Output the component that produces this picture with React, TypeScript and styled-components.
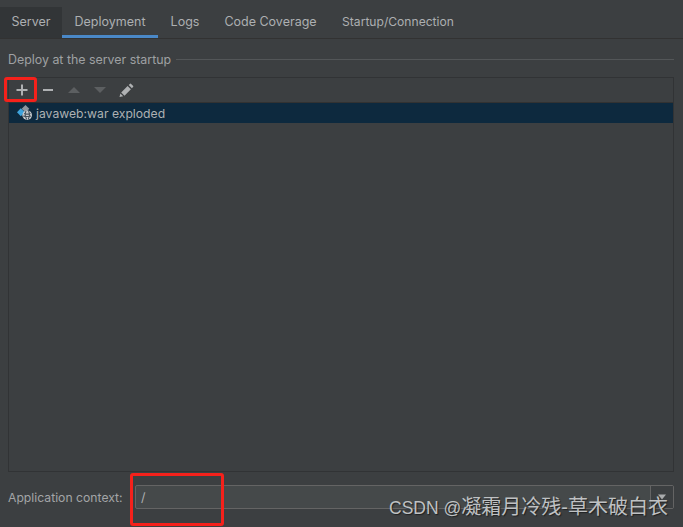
import styled, { createGlobalStyle } from 'styled-components'

const GlobalStyle = createGlobalStyle`
	html, body {
		margin: 0;
		padding: 0;
		background: #3c3f41;
	}
	body {
		font-family: 'Inter', 'Liberation Sans', 'Noto Sans CJK SC', sans-serif;
	}
`

const tabs = ['Server', 'Deployment', 'Logs', 'Code Coverage', 'Startup/Connection']

export default function App() {
	return (
		<Page>
			<GlobalStyle />
			<TabBar>
				{tabs.map((tab) => (
					<Tab key={tab} $name={tab}>
						{tab}
					</Tab>
				))}
			</TabBar>
			<Content>
				<GroupTitle>
					<span>Deploy at the server startup</span>
					<GroupLine />
				</GroupTitle>
				<ListPanel>
					<Toolbar>
						<ToolButton>
							<svg width="12" height="12" viewBox="0 0 12 12">
								<path d="M5 0.5h2v4.5h4.5v2h-4.5v4.5h-2v-4.5h-4.5v-2h4.5z" fill="#afb1b3" />
							</svg>
						</ToolButton>
						<ToolButton>
							<svg width="12" height="12" viewBox="0 0 12 12">
								<path d="M1 5h10v2h-10z" fill="#afb1b3" />
							</svg>
						</ToolButton>
						<ToolButton>
							<svg width="14" height="8" viewBox="0 0 14 8">
								<path d="M7 1l6 6h-12z" fill="#5c5f61" />
							</svg>
						</ToolButton>
						<ToolButton>
							<svg width="14" height="8" viewBox="0 0 14 8">
								<path d="M1 1h12l-6 6z" fill="#5c5f61" />
							</svg>
						</ToolButton>
						<ToolButton>
							<svg width="15" height="15" viewBox="0 0 15 15">
								<path d="M0.5 14l0.9-3.6 2.8 2.8zM2.2 9.4l6.4-6.4 3.3 3.3-6.4 6.4zM9.7 2l1.4-1.3q0.4-0.3 0.8 0l2.3 2.3q0.3 0.4 0 0.8l-1.3 1.4z" fill="#afb1b3" />
							</svg>
						</ToolButton>
					</Toolbar>
					<ArtifactRow>
						<svg width="17" height="16" viewBox="0 0 17 16">
							<path d="M8.5 0l3.8 3.8-3.8 3.8-3.8-3.8z" fill="#8b979f" />
							<path d="M3.8 3.2l4 4-4 4-3.8-4z" fill="#3fa4dc" />
							<circle cx="10.2" cy="10.2" r="4.8" fill="#c9cdd0" />
							<path d="M7 8.5q3 1.2 6.5 0M6.2 11q3.5 1 8 0M9 6q-2 4 0.8 8.5M11.5 5.8q2 4-0.3 8.6" stroke="#45525c" strokeWidth="1.1" fill="none" />
						</svg>
						<ArtifactName>javaweb:war exploded</ArtifactName>
					</ArtifactRow>
				</ListPanel>
				<ContextRow>
					<ContextLabel>Application context:</ContextLabel>
					<ContextField>
						<ContextValue>/</ContextValue>
						<DropButton>
							<svg width="10" height="6" viewBox="0 0 10 6">
								<path d="M1 0.5h8l-4 5z" fill="#a9abad" />
							</svg>
						</DropButton>
					</ContextField>
				</ContextRow>
			</Content>
			<PlusMark />
			<ContextMark />
			<Watermark>
				<WatermarkLatin>CSDN @</WatermarkLatin>凝霜月冷残-草木破白衣
			</Watermark>
		</Page>
	)
}

const Page = styled.div`
	position: relative;
	width: 683px;
	height: 527px;
	overflow: hidden;
	background: #3c3f41;
	color: #bbbbbb;
	font-size: 12.5px;
`
const TabBar = styled.div`
	display: flex;
	align-items: flex-end;
	box-sizing: border-box;
	height: 39px;
	padding-top: 7px;
	border-bottom: 1px solid #323232;
`
const tabWidths: Record<string, number> = {
	Server: 62,
	Deployment: 96,
	Logs: 54,
	'Code Coverage': 117,
	'Startup/Connection': 138,
}
const Tab = styled.div<{ $name: string }>`
	box-sizing: border-box;
	width: ${(props) => tabWidths[props.$name]}px;
	height: 31px;
	line-height: 29px;
	text-align: center;
	white-space: nowrap;
	color: #adafb1;
	font-size: ${(props) => (props.$name === 'Startup/Connection' ? '12.1px' : '12.5px')};
	background: ${(props) => (props.$name === 'Server' ? '#323537' : 'transparent')};
	border-bottom: 3px solid ${(props) => (props.$name === 'Deployment' ? '#4a88c7' : 'transparent')};
`
const Content = styled.div`
	display: flex;
	flex-direction: column;
	padding: 12px 9px 0 8px;
`
const GroupTitle = styled.div`
	display: flex;
	align-items: center;
	gap: 5px;
	height: 17px;
	color: #9fa1a3;
	font-size: 12.4px;
`
const GroupLine = styled.div`
	flex: 1;
	height: 1px;
	background: #535658;
`
const ListPanel = styled.div`
	box-sizing: border-box;
	height: 395px;
	margin-top: 9px;
	border: 1px solid #313335;
`
const Toolbar = styled.div`
	display: flex;
	align-items: center;
	height: 24px;
	border-bottom: 1px solid #323232;
`
const ToolButton = styled.div`
	display: flex;
	align-items: center;
	justify-content: center;
	width: 26px;
	height: 24px;
`
const ArtifactRow = styled.div`
	display: flex;
	align-items: center;
	gap: 2px;
	height: 20px;
	padding-left: 8px;
	background: #0d293e;
`
const ArtifactName = styled.span`
	color: #aeb1b3;
	font-size: 12.2px;
`
const ContextRow = styled.div`
	display: flex;
	align-items: center;
	gap: 13px;
	margin-top: 13px;
`
const ContextLabel = styled.span`
	color: #a3a5a7;
	font-size: 12.2px;
	width: 114px;
	white-space: nowrap;
`
const ContextField = styled.div`
	flex: 1;
	display: flex;
	align-items: center;
	justify-content: space-between;
	box-sizing: border-box;
	height: 24px;
	border: 1px solid #646464;
	border-radius: 2px;
	background: #45494a;
`
const ContextValue = styled.span`
	padding-left: 5px;
	color: #adafb1;
`
const DropButton = styled.div`
	display: flex;
	align-items: center;
	justify-content: center;
	width: 22px;
	height: 22px;
	background: #3c3f41;
	border-left: 1px solid #646464;
`
const RedMark = styled.div`
	position: absolute;
	box-sizing: border-box;
	border: 3px solid #f5211b;
	border-radius: 3px;
`
const PlusMark = styled(RedMark)`
	left: 4px;
	top: 77px;
	width: 33px;
	height: 25px;
`
const ContextMark = styled(RedMark)`
	left: 130px;
	top: 473px;
	width: 94px;
	height: 53px;
`
const Watermark = styled.div`
	position: absolute;
	left: 389px;
	top: 494px;
	font-family: 'Liberation Sans', 'Noto Sans CJK SC', sans-serif;
	font-size: 20px;
	line-height: 26px;
	white-space: nowrap;
	color: #bfc1c3;
	text-shadow: 1px 1px 1px #1f2021;
`
const WatermarkLatin = styled.span`
	font-size: 17.5px;
`
